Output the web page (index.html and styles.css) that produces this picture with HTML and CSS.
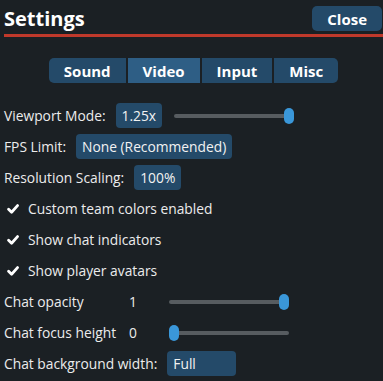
FILE: index.html
```html
<!DOCTYPE html>
<html lang="en">
<head>
    <meta charset="UTF-8">
    <meta name="viewport" content="width=device-width, initial-scale=1.0">
    <title>Settings</title>
    <link rel="stylesheet" href="styles.css">
</head>
<body>
    <div class="header">
        <h1>Settings</h1>
        <button class="btn close-btn">Close</button>
    </div>

    <div class="tabs">
        <button class="tab">Sound</button>
        <button class="tab active">Video</button>
        <button class="tab">Input</button>
        <button class="tab">Misc</button>
    </div>

    <div class="options">
        <div class="row">
            <span class="label">Viewport Mode:</span>
            <span class="select">1.25x</span>
            <input type="range" class="slider" min="0" max="4" value="4">
        </div>
        <div class="row">
            <span class="label">FPS Limit:</span>
            <span class="select">None (Recommended)</span>
        </div>
        <div class="row">
            <span class="label">Resolution Scaling:</span>
            <span class="select">100%</span>
        </div>

        <label class="row check">
            <svg class="tick" viewBox="0 0 12 10"><polyline points="1.6,5.2 4.6,8.2 10.5,1.6"/></svg>
            <span>Custom team colors enabled</span>
        </label>
        <label class="row check">
            <svg class="tick" viewBox="0 0 12 10"><polyline points="1.6,5.2 4.6,8.2 10.5,1.6"/></svg>
            <span>Show chat indicators</span>
        </label>
        <label class="row check">
            <svg class="tick" viewBox="0 0 12 10"><polyline points="1.6,5.2 4.6,8.2 10.5,1.6"/></svg>
            <span>Show player avatars</span>
        </label>

        <div class="row">
            <span class="label fixed">Chat opacity</span>
            <span class="value">1</span>
            <input type="range" class="slider" min="0" max="1" step="0.1" value="1">
        </div>
        <div class="row">
            <span class="label fixed">Chat focus height</span>
            <span class="value">0</span>
            <input type="range" class="slider" min="0" max="10" value="0">
        </div>
        <div class="row">
            <span class="label">Chat background width:</span>
            <span class="select wide">Full</span>
        </div>
    </div>
</body>
</html>
```

FILE: styles.css
```css
body {
    margin: 0;
    padding: 6px 0 0 4px;
    background-color: #1b2024;
    color: #ececec;
    font-family: "Open Sans", sans-serif;
    font-size: 13.8px;
}
.header {
    display: flex;
    justify-content: space-between;
    align-items: center;
    height: 25px;
    padding-bottom: 3px;
    border-bottom: 3px solid #c0392b;
}
h1 {
    margin: 0;
    font-size: 20px;
    line-height: 25px;
    font-weight: 700;
    color: #ffffff;
}
.btn {
    height: 25px;
    padding: 0 15px;
    border: none;
    border-radius: 5px;
    background-color: #244a69;
    color: #ffffff;
    font-family: inherit;
    font-size: 15px;
    font-weight: 700;
}
.close-btn {
    margin-right: 1px;
}
.tabs {
    display: flex;
    justify-content: center;
    gap: 2px;
    margin-top: 21px;
}
.tab {
    height: 25px;
    padding: 0 15px;
    border: none;
    background-color: #244a69;
    color: #ffffff;
    font-family: inherit;
    font-size: 15px;
    font-weight: 700;
}
.tab:first-child {
    border-radius: 5px 0 0 5px;
}
.tab:last-child {
    border-radius: 0 5px 5px 0;
}
.tab.active {
    background-color: #2e5e85;
}
.options {
    display: flex;
    flex-direction: column;
    gap: 6px;
    margin-top: 20px;
}
.row {
    display: flex;
    align-items: center;
    gap: 10px;
    height: 25px;
}
.select {
    display: inline-flex;
    align-items: center;
    height: 25px;
    padding: 0 6px;
    border-radius: 4px;
    background-color: #244a69;
    color: #f2f2f2;
}
.select.wide {
    width: 57px;
}
.slider {
    -webkit-appearance: none;
    appearance: none;
    width: 120px;
    height: 16px;
    margin: 0 0 0 2px;
    background: transparent;
}
.slider::-webkit-slider-runnable-track {
    height: 4px;
    border-radius: 2px;
    background-color: #575c60;
}
.slider::-webkit-slider-thumb {
    -webkit-appearance: none;
    width: 10px;
    height: 16px;
    margin-top: -6px;
    border-radius: 5px;
    background-color: #3a97d9;
}
.check {
    padding-left: 3px;
    gap: 9px;
}
.tick {
    width: 12px;
    height: 10px;
    fill: none;
    stroke: #ffffff;
    stroke-width: 2.8;
    stroke-linecap: round;
    stroke-linejoin: round;
}
.fixed {
    width: 115px;
}
.value {
    width: 30px;
}
.fixed + .value + .slider {
    margin-left: 0;
}
```
